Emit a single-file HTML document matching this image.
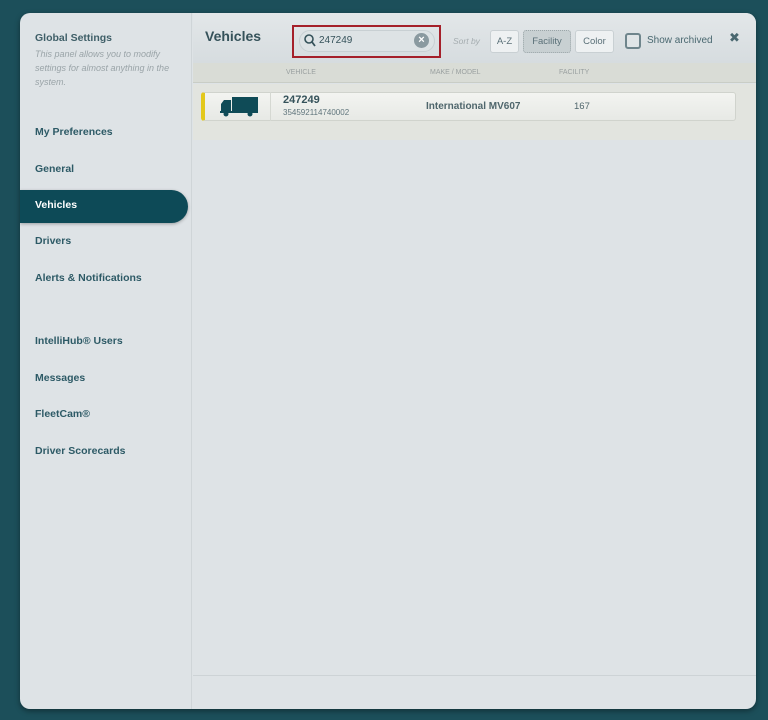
<!DOCTYPE html>
<html><head><style>
*{margin:0;padding:0;box-sizing:border-box}
body{width:768px;height:720px;background:#1c4f5a;font-family:"Liberation Sans","DejaVu Sans",sans-serif;position:relative;overflow:hidden}
.panel{position:absolute;left:20px;top:13px;width:736px;height:696px;background:#dee3e6;border-radius:10px;overflow:hidden;box-shadow:0 2px 6px rgba(0,0,0,.4)}
.side{position:absolute;left:0;top:0;width:172px;height:100%;border-right:1px solid #cfd5d8}
.t{position:absolute;left:15px;font-size:10.5px;font-weight:bold;color:#2d5a66}
.desc{position:absolute;left:15px;top:34px;font-size:9px;font-style:italic;color:#9aa4a8;line-height:14px;width:145px}
.sel{position:absolute;left:0;top:177px;width:168px;height:33px;background:#0d4a57;border-radius:0 17px 17px 0;box-shadow:0 1px 3px rgba(0,0,0,.3)}
.main{position:absolute;left:173px;top:0;right:0;height:100%}
.hdr{position:absolute;left:0;top:0;right:0;height:50px;background:linear-gradient(#e3e7e9,#d6dcdf)}
.colh{position:absolute;left:0;top:50px;right:0;height:20px;background:#d9dcd6;border-bottom:1px solid #c9cdc6;font-size:7px;color:#9aa0a0}
.rows{position:absolute;left:0;top:71px;right:0;height:56px;background:#e2e4df}
.row{position:absolute;left:8px;top:8px;width:535px;height:29px;background:linear-gradient(#f3f4f1,#e7e9e5);border:1px solid #d0d3cd;border-left:4px solid #e3c81b;border-radius:3px}
.btn{position:absolute;top:17px;height:23px;border:1px solid #c9d0d3;border-radius:3px;background:#eef1f2;font-size:9.5px;color:#5a7078;text-align:center;line-height:21px}
</style></head><body>
<div class="panel">
 <div class="side">
  <div class="t" style="top:19px;color:#3f5f68">Global Settings</div>
  <div class="desc">This panel allows you to modify settings for almost anything in the system.</div>
  <div class="t" style="top:113px">My Preferences</div>
  <div class="t" style="top:150px">General</div>
  <div class="sel"></div>
  <div class="t" style="top:186px;color:#fff">Vehicles</div>
  <div class="t" style="top:222px">Drivers</div>
  <div class="t" style="top:259px">Alerts &amp; Notifications</div>
  <div class="t" style="top:322px">IntelliHub® Users</div>
  <div class="t" style="top:359px">Messages</div>
  <div class="t" style="top:395px">FleetCam®</div>
  <div class="t" style="top:432px">Driver Scorecards</div>
 </div>
 <div class="main">
  <div class="hdr">
   <div style="position:absolute;left:12px;top:15px;font-size:14px;font-weight:bold;color:#35525a">Vehicles</div>
   <div style="position:absolute;left:99px;top:12px;width:149px;height:33px;border:2px solid #a5202a"></div>
   <div style="position:absolute;left:106px;top:17px;width:136px;height:22px;border-radius:11px;background:#dde3e5;border:1px solid #c8d0d3"></div>
   <svg style="position:absolute;left:111px;top:21px" width="12" height="13"><circle cx="5" cy="5" r="4" fill="none" stroke="#35525a" stroke-width="1.6"/><line x1="8" y1="8" x2="11" y2="12" stroke="#35525a" stroke-width="1.8"/></svg>
   <div style="position:absolute;left:126px;top:22px;font-size:10px;color:#35525a">247249</div>
   <div style="position:absolute;left:221px;top:20px;width:15px;height:15px;border-radius:50%;background:#8a9aa0;color:#fff;font-size:11px;font-weight:bold;line-height:15px;text-align:center">×</div>
   <div style="position:absolute;left:260px;top:23px;font-size:8.5px;font-style:italic;color:#a5adb0">Sort by</div>
   <div class="btn" style="left:297px;width:29px">A-Z</div>
   <div class="btn" style="left:330px;width:48px;background:#c8d0d2;border-style:dotted;border-color:#9aa5a8">Facility</div>
   <div class="btn" style="left:382px;width:39px">Color</div>
   <div style="position:absolute;left:432px;top:20px;width:16px;height:16px;border:2px solid #6f858c;border-radius:3px;background:#e0e5e7"></div>
   <div style="position:absolute;left:454px;top:22px;font-size:10px;color:#4a6870">Show archived</div>
   <div style="position:absolute;left:536px;top:17px;font-size:13px;font-weight:bold;color:#4a6870">✖</div>
  </div>
  <div class="colh"><span style="position:absolute;left:93px;top:6px">VEHICLE</span><span style="position:absolute;left:237px;top:6px">MAKE / MODEL</span><span style="position:absolute;left:366px;top:6px">FACILITY</span></div>
  <div class="rows"><div class="row">
   <svg style="position:absolute;left:14px;top:4px" width="40" height="20"><rect x="13" y="0" width="26" height="14" fill="#0f4b57"/><path d="M2 7 L5 3 L12 3 L12 15 L2 15Z" fill="#0f4b57"/><rect x="1" y="14" width="38" height="2" fill="#0f4b57"/><circle cx="7" cy="17" r="2.5" fill="#0f4b57"/><circle cx="31" cy="17" r="2.5" fill="#0f4b57"/></svg>
   <div style="position:absolute;left:65px;top:-1px;height:29px;border-left:1px solid #d5d8d2"></div>
   <div style="position:absolute;left:78px;top:1px;font-size:11px;font-weight:bold;color:#35525a">247249</div>
   <div style="position:absolute;left:78px;top:15px;font-size:8px;color:#60757c">354592114740002</div>
   <div style="position:absolute;left:221px;top:8px;font-size:10px;font-weight:bold;color:#4f666c">International MV607</div>
   <div style="position:absolute;left:369px;top:8px;font-size:9.5px;color:#4f666c">167</div>
  </div></div>
  <div style="position:absolute;left:0;right:0;top:662px;border-top:1px solid #cdd3d6"></div>
 </div>
</div>
</body></html>
